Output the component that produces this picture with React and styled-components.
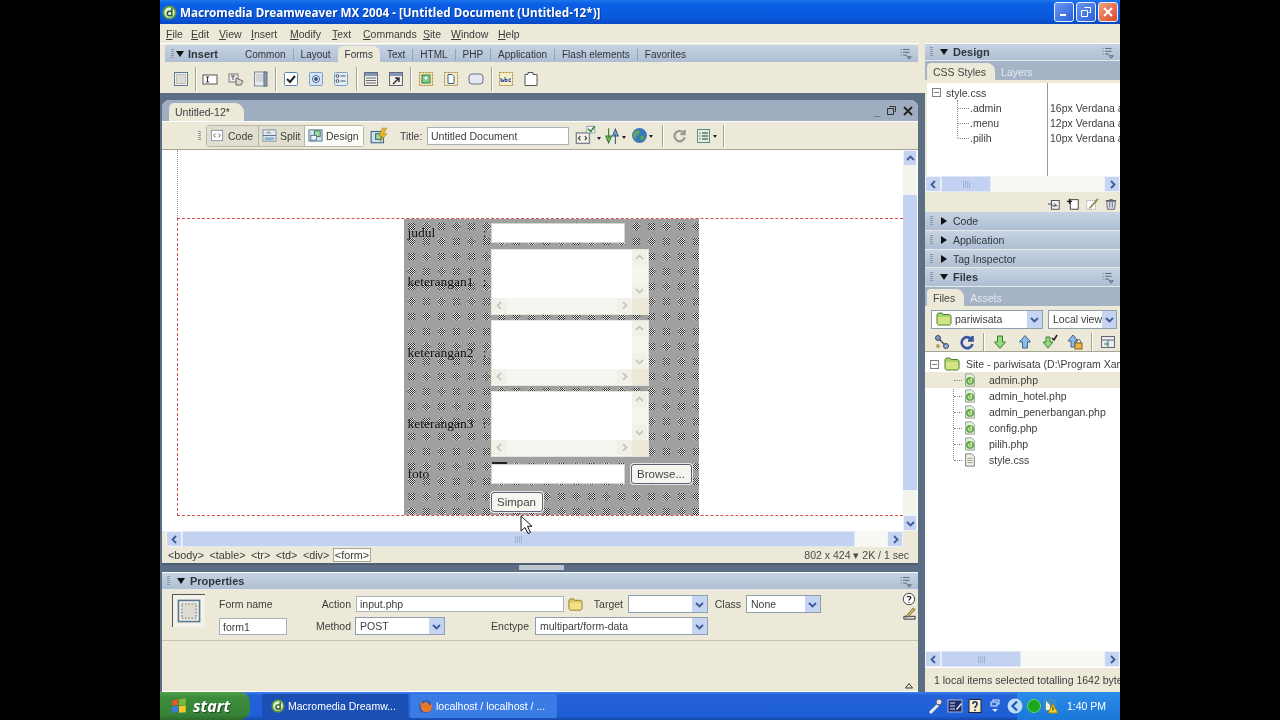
import React from 'react';
import styled, { createGlobalStyle } from 'styled-components';

const GlobalStyle = createGlobalStyle`
  html, body { margin: 0; padding: 0; background: #000; }
`;

const ui = `"Liberation Sans", Arial, sans-serif`;

const Screen = styled.div`
  position: relative;
  width: 960px;
  height: 720px;
  margin: 0 auto;
  display: flex;
  flex-direction: column;
  overflow: hidden;
  background: #ece9d8;
  font-family: ${ui};
  font-size: 10.5px;
  color: #3c3c3c;
  filter: blur(0.3px);
`;

const TitleBar = styled.div`
  height: 24px;
  flex: none;
  display: flex;
  align-items: center;
  padding: 0 2px 0 2px;
  background: linear-gradient(#1f77ee 0, #0a5fe4 4px, #0a58dc 18px, #0848c4 100%);
  color: #fff;
  font-family: "Noto Sans", sans-serif;
  font-weight: 700;
  font-size: 11.7px;
  white-space: nowrap;
`;
const TitleText = styled.span`
  margin-left: 3px;
  flex: 1;
  text-shadow: 1px 1px 0 #0a3a9c;
`;
const WinButton = styled.div`
  width: 20px;
  height: 20px;
  margin-left: 2px;
  border: 1px solid #e8eefc;
  border-radius: 3px;
  box-sizing: border-box;
  display: flex;
  align-items: center;
  justify-content: center;
  background: ${p => (p.$close ? 'linear-gradient(135deg,#f0a080,#d8492a)' : 'linear-gradient(135deg,#6b97ee,#2a5fd8)')};
`;

const MenuBar = styled.div`
  height: 19px;
  flex: none;
  display: flex;
  align-items: center;
  padding-left: 6px;
  background: #ece9d8;
`;
const MenuItem = styled.span`
  width: ${p => p.$w}px;
  flex: none;
  &:first-letter { text-decoration: underline; }
`;

const Workspace = styled.div`
  flex: 1;
  min-height: 0;
  display: flex;
  background: linear-gradient(#ece9d8 0, #ece9d8 50px, #5c6e84 50px);
`;
const LeftColumn = styled.div`
  width: 758px;
  display: flex;
  flex-direction: column;
`;
const RightColumn = styled.div`
  width: 195px;
  margin-left: 7px;
  display: flex;
  flex-direction: column;
  background: #ece9d8;
  border-top: 1px solid #fff;
`;

const PanelHead = styled.div`
  height: ${p => p.$h || 17}px;
  flex: none;
  display: flex;
  align-items: center;
  gap: 5px;
  padding: 0 6px 0 5px;
  box-sizing: border-box;
  background: linear-gradient(#c6d3e3, #afbed2);
  border-bottom: 1px solid #e6e8ea;
  font-weight: ${p => (p.$bold ? 700 : 400)};
  color: #30363e;
  font-size: ${p => (p.$bold ? 11 : 10.5)}px;
`;
const Grip = styled.i`
  width: 3px;
  height: 10px;
  margin-right: ${p => p.$m ?? 2}px;
  background: repeating-linear-gradient(#8c98a8 0 1px, transparent 1px 2px);
`;
const Grow = styled.div`
  flex: 1;
`;

const InsertPanel = styled.div`
  flex: none;
  height: 52px;
  box-sizing: border-box;
  border-top: 1px solid #fff;
  padding-top: 1px;
  display: flex;
  flex-direction: column;
`;
const InsertHead = styled(PanelHead)`
  gap: 0;
  padding-left: 6px;
  margin-left: 5px;
  border-bottom: none;
`;
const InsertTitle = styled.b`
  width: 50px;
  margin-left: 4px;
  font-size: 11px;
`;
const InsertTab = styled.div`
  display: flex;
  align-items: center;
  padding: 0 7px;
  font-weight: 400;
  font-size: 10px;
  border-right: ${p => (p.$plain ? 'none' : '1px solid #93a2b6')};
  background: ${p => (p.$active ? '#ece9d8' : 'transparent')};
  border-radius: ${p => (p.$active ? '5px 7px 0 0' : '0')};
  height: ${p => (p.$active ? '16px' : '12px')};
  margin-top: ${p => (p.$active ? '1px' : '2px')};
`;
const InsertBar = styled.div`
  flex: 1;
  display: flex;
  align-items: center;
  padding-left: 8px;
`;
const Slot = styled.div`
  width: 25.3px;
  display: flex;
  justify-content: center;
  align-items: center;
`;
const VSep = styled.i`
  width: 1px;
  height: ${p => p.$h || 24}px;
  margin: 0 ${p => p.$m || 1.7}px;
  background: #a4a294;
  box-shadow: 1px 0 0 #fff;
`;

const DocWindow = styled.div`
  flex: none;
  height: 465px;
  box-sizing: border-box;
  margin: 5px 0 0 2px;
  display: flex;
  flex-direction: column;
  background: #ece9d8;
  border-radius: 8px 8px 0 0;
  overflow: hidden;
  border-bottom: 2px solid #4e5f75;
`;
const DocTabs = styled.div`
  height: 22px;
  flex: none;
  box-sizing: border-box;
  display: flex;
  align-items: flex-end;
  padding-left: 7px;
  background: #9eadc0;
  border-bottom: 1px solid #fff;
`;
const DocTab = styled.div`
  height: 18px;
  padding: 0 14px 0 6px;
  display: flex;
  align-items: center;
  background: #ece9d8;
  border-radius: 5px 9px 0 0;
  font-size: 10.5px;
`;
const DocWinIcons = styled.div`
  display: flex;
  align-items: center;
  gap: 6px;
  height: 100%;
  margin-right: 5px;
  font-size: 11px;
  color: #333;
`;
const DocBar = styled.div`
  height: 28px;
  flex: none;
  box-sizing: border-box;
  display: flex;
  align-items: center;
  padding-left: 36px;
  background: #ece9d8;
  border-bottom: 1px solid #a7a596;
`;
const ViewGroup = styled.div`
  display: flex;
  height: 20px;
  margin-left: 3px;
  border: 1px solid #b8b6a6;
  border-radius: 3px;
`;
const ViewButton = styled.div`
  display: flex;
  align-items: center;
  gap: 3px;
  width: ${p => p.$w}px;
  box-sizing: border-box;
  padding-left: 3px;
  background: ${p => (p.$active ? '#fbfbf8' : '#e2dfd0')};
  border-right: 1px solid #b8b6a6;
  &:last-child { border-right: none; }
`;
const TitleLabel = styled.span`
  width: 27px;
  flex: none;
  margin-left: 12px;
`;
const Field = styled.div`
  box-sizing: border-box;
  flex: none;
  width: ${p => p.$w}px;
  height: ${p => p.$h || 16}px;
  padding-left: 3px;
  display: flex;
  align-items: center;
  background: #fff;
  border: 1px solid #a9b2bc;
  white-space: nowrap;
  overflow: hidden;
`;
const BarIcon = styled.div`
  display: flex;
  align-items: center;
  margin-left: ${p => p.$l ?? 8}px;
`;
const Caret = styled.i`
  width: 0;
  height: 0;
  align-self: flex-end;
  margin: 0 0 6px 1px;
  border-left: 2.5px solid transparent;
  border-right: 2.5px solid transparent;
  border-top: 3px solid #222;
`;

const DocBody = styled.div`
  flex: 1;
  min-height: 0;
  display: flex;
  background: #fff;
`;
const Canvas = styled.div`
  position: relative;
  flex: 1;
  min-width: 0;
  padding: 68px 0 0 15px;
  box-sizing: border-box;
  background: #fff;
`;
const Ruler = styled.i`
  position: absolute;
  left: 15px;
  top: 0;
  height: 68px;
  border-left: 1px dotted #9a9a9a;
`;
const Page = styled.div`
  display: flex;
  justify-content: center;
  height: 298px;
  box-sizing: border-box;
  padding-left: 21px;
  border-top: 1px dashed #d0504c;
  border-bottom: 1px dashed #d0504c;
  border-left: 1px dashed #d0504c;
`;
const FormTable = styled.div`
  position: relative;
  width: 295px;
  height: 296px;
  box-sizing: border-box;
  background: #a0a0a0;
  display: grid;
  grid-template-columns: 87px 1fr;
  grid-template-rows: 28px 70px 72px 70px 30px 26px;
  font-family: "Liberation Serif", serif;
  font-size: 13.5px;
  color: #111;
  &::before {
    content: '';
    position: absolute;
    inset: 0;
    background: repeating-conic-gradient(#333 0 25%, #e4e4e4 0 50%) 0 0 / 2px 2px;
    -webkit-mask-image: radial-gradient(circle at 7.5px 7.5px, #000 0 3.8px, transparent 4.2px);
    -webkit-mask-size: 15px 15px;
    mask-image: radial-gradient(circle at 7.5px 7.5px, #000 0 3.8px, transparent 4.2px);
    mask-size: 15px 15px;
  }
`;
const FormLabel = styled.div`
  position: relative;
  display: flex;
  align-items: center;
  justify-content: space-between;
  padding: 0 4px 0 4px;
  grid-column: 1;
`;
const FormCell = styled.div`
  position: relative;
  grid-column: 2;
  display: flex;
  align-items: center;
  gap: 6px;
`;
const TextInput = styled.div`
  box-sizing: border-box;
  width: 134px;
  height: 20px;
  background: #fff;
  border: 1px solid #d4d4d0;
`;
const FileInput = styled(TextInput)`
  position: relative;
  &::before {
    content: '';
    position: absolute;
    left: 0;
    top: -3px;
    width: 15px;
    height: 2px;
    background: #222;
  }
`;
const TextArea = styled.div`
  width: 158px;
  height: 66px;
  display: grid;
  grid-template-columns: 1fr 16px;
  grid-template-rows: 1fr 16px;
  background: #fff;
  border: 1px solid #e4e4dc;
  box-sizing: border-box;
`;
const AreaV = styled.div`
  grid-row: 1;
  grid-column: 2;
  display: flex;
  flex-direction: column;
  justify-content: space-between;
  background: #f6f6f0;
`;
const AreaH = styled.div`
  grid-row: 2;
  grid-column: 1;
  display: flex;
  justify-content: space-between;
  background: #f6f6f0;
`;
const AreaCorner = styled.div`
  grid-row: 2;
  grid-column: 2;
  background: #ece9d8;
`;
const AreaBtn = styled.div`
  width: 15px;
  height: 15px;
  display: flex;
  align-items: center;
  justify-content: center;
  background: #f1f1ea;
`;
const PushButton = styled.div`
  box-sizing: border-box;
  width: ${p => p.$w}px;
  height: 20px;
  display: flex;
  align-items: center;
  justify-content: center;
  font-family: ${ui};
  font-size: 11.5px;
  color: #444;
  background: #f6f6f0;
  border: 1px solid #5a6470;
  border-radius: 3px;
  box-shadow: 0 0 0 1px #e8e8e8;
`;
const Cursor = styled.svg`
  position: absolute;
  left: 358px;
  top: 365px;
`;

const VScroll = styled.div`
  width: 14px;
  flex: none;
  margin-right: 1px;
  display: flex;
  flex-direction: column;
  background: #f4f4ee;
`;
const VThumb = styled.div`
  flex: none;
  height: 295px;
  margin-top: 29px;
  background: #c3d2f1;
`;
const ScrollBtn = styled.div`
  flex: none;
  width: ${p => p.$w || 14}px;
  height: ${p => p.$h || 15}px;
  display: flex;
  align-items: center;
  justify-content: center;
  background: #c6d4f2;
  border: 1px solid #eef2fa;
  box-sizing: border-box;
`;
const HScroll = styled.div`
  height: 16px;
  flex: none;
  display: flex;
  align-items: center;
  margin-left: ${p => p.$l || 0}px;
  margin-right: ${p => p.$r || 0}px;
  background: #f8f8f4;
`;
const HThumb = styled.div`
  width: ${p => p.$w}px;
  height: 100%;
  box-sizing: border-box;
  display: flex;
  align-items: center;
  justify-content: center;
  background: #c3d2f1;
  border: 1px solid #dfe7f7;
  &::after {
    content: '';
    width: 7px;
    height: 7px;
    background: repeating-linear-gradient(90deg, #9fb2d8 0 1px, transparent 1px 2px);
  }
`;

const TagBar = styled.div`
  height: 16px;
  flex: none;
  display: flex;
  align-items: center;
  gap: 5.5px;
  padding: 0 0 0 6px;
  background: #ece9d8;
  font-size: 10.8px;
`;
const ActiveTag = styled.span`
  background: #fbfbf6;
  border: 1px solid #a8a89a;
  margin-left: -2px;
  padding: 0 1px;
`;
const TagStat = styled.span`
  margin-right: 9px;
  font-size: 10.5px;
  color: #4a4a4a;
`;

const Splitter = styled.div`
  height: 7px;
  flex: none;
  display: flex;
  justify-content: center;
`;
const SplitHandle = styled.div`
  width: 45px;
  height: 5px;
  margin-left: 4px;
  background: #bcc4cc;
`;

const Properties = styled.div`
  flex: 1;
  margin: 0 0 0 2px;
  display: flex;
  flex-direction: column;
  background: #ece9d8;
  border-top: 1px solid #fff;
  border-bottom: 1px solid #fff;
`;
const PropForm = styled.div`
  height: 50px;
  flex: none;
  display: flex;
  padding-left: 10px;
  border-bottom: 1px solid #c5c2b0;
`;
const FormThumb = styled.div`
  width: 32px;
  height: 32px;
  margin-top: 4px;
  flex: none;
  display: flex;
  align-items: center;
  justify-content: center;
  border-top: 1px solid #555;
  border-left: 1px solid #555;
  background: #f4f2e8;
`;
const FormNameCol = styled.div`
  width: 68px;
  margin-left: 14px;
  flex: none;
  display: flex;
  flex-direction: column;
  gap: 8px;
  padding-top: 8px;
`;
const PropRows = styled.div`
  flex: 1;
  display: flex;
  flex-direction: column;
  gap: 4px;
  padding-top: 5px;
`;
const PropRow = styled.div`
  height: 18px;
  display: flex;
  align-items: center;
`;
const PropLabel = styled.span`
  width: ${p => p.$w}px;
  flex: none;
  text-align: right;
  margin-right: ${p => p.$m || 5}px;
`;
const SelectBox = styled.div`
  box-sizing: border-box;
  width: ${p => p.$w}px;
  height: ${p => p.$h || 18}px;
  flex: none;
  display: flex;
  align-items: center;
  justify-content: space-between;
  padding-left: 4px;
  background: #fff;
  border: 1px solid #8f9fb2;
  white-space: nowrap;
`;
const SelectArrow = styled.div`
  width: 15px;
  height: 100%;
  display: flex;
  align-items: center;
  justify-content: center;
  background: #c6d4f2;
`;
const PropHelp = styled.div`
  width: 16px;
  flex: none;
  margin-right: 1px;
  padding-top: 2px;
  display: flex;
  flex-direction: column;
  align-items: center;
  gap: 0;
`;
const PropFoot = styled.div`
  flex: 1;
  display: flex;
  justify-content: flex-end;
  align-items: flex-end;
  padding: 0 5px 2px 0;
`;

const PanelTabs = styled.div`
  height: 19px;
  flex: none;
  display: flex;
  align-items: flex-end;
  padding-left: 2px;
  background: #a5b3c6;
`;
const PanelTab = styled.div`
  height: 17px;
  padding: 0 ${p => (p.$active ? '9px' : '6px')} 0 6px;
  display: flex;
  align-items: center;
  color: ${p => (p.$active ? '#444' : '#e4e9ef')};
  background: ${p => (p.$active ? '#ece9d8' : 'transparent')};
  border-radius: 4px 8px 0 0;
`;
const CssBox = styled.div`
  height: 93px;
  flex: none;
  display: flex;
  margin: 3px 0 0 2px;
  background: #fff;
`;
const CssNames = styled.div`
  width: 121px;
  flex: none;
  box-sizing: border-box;
  padding: 2px 0 0 5px;
  border-right: 1px solid #9a9a8e;
`;
const CssValues = styled.div`
  flex: 1;
  min-width: 0;
  overflow: hidden;
  padding-top: 17px;
  padding-left: 2px;
  white-space: nowrap;
`;
const TreeLine = styled.div`
  height: 15px;
  display: flex;
  align-items: center;
  gap: 5px;
`;
const Expander = styled.i`
  width: 9px;
  height: 9px;
  flex: none;
  box-sizing: border-box;
  border: 1px solid #80807a;
  background: linear-gradient(#80807a, #80807a) center / 5px 1px no-repeat #fff;
`;
const CssChildren = styled.div`
  margin-left: 25px;
  border-left: 1px dotted #888;
  height: 38px;
`;
const CssChild = styled.div`
  height: 15px;
  display: flex;
  align-items: center;
  padding-left: 12px;
  position: relative;
  &::before {
    content: '';
    position: absolute;
    left: 0;
    top: 8px;
    width: 11px;
    border-top: 1px dotted #888;
  }
`;
const ActionRow = styled.div`
  height: 20px;
  flex: none;
  box-sizing: border-box;
  padding: 4px 2px 0 0;
  display: flex;
  align-items: center;
  justify-content: flex-end;
  gap: 5px;
`;
const FilesTools = styled.div`
  height: 19px;
  flex: none;
  display: flex;
  align-items: center;
  padding-left: 9px;
  border-bottom: 1px solid #a7a596;
`;
const FilesSelects = styled.div`
  height: 26px;
  flex: none;
  display: flex;
  align-items: center;
  gap: 5px;
  padding-left: 6px;
`;
const FolderText = styled.span`
  display: flex;
  align-items: center;
  gap: 3px;
`;
const FileTree = styled.div`
  flex: 1;
  min-height: 0;
  background: #fff;
  padding-top: 4px;
`;
const SiteRow = styled.div`
  height: 16px;
  display: flex;
  align-items: center;
  padding-left: 5px;
  white-space: nowrap;
  overflow: hidden;
`;
const SiteName = styled.span`
  margin-left: 6px;
`;
const FileList = styled.div`
  position: relative;
  &::before {
    content: '';
    position: absolute;
    left: 28px;
    top: 0;
    height: 88px;
    border-left: 1px dotted #888;
  }
`;
const FileRow = styled.div`
  height: 16px;
  display: flex;
  align-items: center;
  gap: 12px;
  padding-left: 38px;
  position: relative;
  background: ${p => (p.$selected ? '#ece9d8' : 'transparent')};
  &::before {
    content: '';
    position: absolute;
    left: 29px;
    top: 8px;
    width: 8px;
    border-top: 1px dotted #888;
  }
`;
const StatusLine = styled.div`
  height: 24px;
  flex: none;
  display: flex;
  align-items: center;
  padding-left: 9px;
  white-space: nowrap;
  overflow: hidden;
  border-top: 1px solid #fff;
`;

const Taskbar = styled.div`
  height: 28px;
  flex: none;
  display: flex;
  align-items: center;
  background: linear-gradient(#3f83ea 0, #2362d8 3px, #1f5fd6 24px, #1848a8 100%);
  color: #fff;
`;
const StartButton = styled.div`
  width: 90px;
  height: 100%;
  display: flex;
  align-items: center;
  gap: 5px;
  padding-left: 10px;
  box-sizing: border-box;
  background: linear-gradient(#4fa04f 0, #3c8c3c 20%, #388438 80%, #2c6c2c 100%);
  border-radius: 0 10px 10px 0;
  font: italic 700 16px "Noto Sans", sans-serif;
  text-shadow: 1px 1px 1px #204820;
`;
const TaskButton = styled.div`
  width: ${p => p.$w}px;
  height: 24px;
  margin-left: ${p => p.$l}px;
  padding-left: ${p => (p.$active ? '9px' : '8px')};
  display: flex;
  align-items: center;
  gap: 3px;
  box-sizing: border-box;
  border-radius: 2px;
  white-space: nowrap;
  background: ${p => (p.$active ? '#1c4fb4' : '#3a7ce4')};
  font-size: 10.5px;
`;
const QuickLaunch = styled.div`
  margin-left: auto;
  margin-right: -6px;
  position: relative;
  display: flex;
  align-items: center;
  gap: 4px;
`;
const Tray = styled.div`
  width: 103px;
  height: 100%;
  flex: none;
  display: flex;
  align-items: center;
  gap: 1px;
  padding-left: 9px;
  box-sizing: border-box;
  white-space: nowrap;
  background: linear-gradient(#2c8ce8, #1a78d8);
  font-size: 10.5px;
`;
const Clock = styled.span`
  margin-left: 7px;
`;

// icon drawings, all on a 16x16 box
const glyphs = {
  form: <><rect x="1.5" y="1.5" width="13" height="13" fill="#f4f2e8" stroke="#5a7a94" /><rect x="3.5" y="3.5" width="9" height="9" fill="#dcdcd2" stroke="#999" strokeDasharray="1 1" /></>,
  text: <><rect x="1" y="4" width="14" height="9" fill="#fff" stroke="#555" /><path d="M4 6h3M5.5 6v5M4 11h3" stroke="#333" fill="none" /></>,
  hidden: <><rect x="1" y="3" width="9" height="8" fill="#eee" stroke="#777" /><path d="M3 5h4M5 5v4" stroke="#555" /><path d="M8 7l7 3-2 4H8z" fill="#d8d8c8" stroke="#666" /></>,
  area: <><rect x="1.5" y="1" width="11" height="14" fill="#e8ecf2" stroke="#7a8a9c" /><path d="M3 4h8M3 6h8M3 8h8M3 10h8" stroke="#bbb" /><rect x="11" y="1" width="3" height="14" fill="#8ca0b8" stroke="#667" /></>,
  check: <><rect x="1.5" y="1.5" width="13" height="13" rx="1" fill="#fff" stroke="#5d84ac" /><path d="M4 8l3 3 5-6" stroke="#222" strokeWidth="2" fill="none" /></>,
  radio: <><rect x="1.5" y="1.5" width="13" height="13" rx="1" fill="#d6e4f4" stroke="#7d9fc4" /><circle cx="8" cy="8" r="3.5" fill="#fff" stroke="#3a5f94" /><circle cx="8" cy="8" r="2" fill="#34587c" /></>,
  radios: <><rect x="1.5" y="1.5" width="13" height="13" rx="1" fill="#e4ecf6" stroke="#7d9fc4" /><circle cx="4.5" cy="5" r="1.4" fill="#fff" stroke="#345" /><circle cx="4.5" cy="10" r="1.4" fill="#fff" stroke="#345" /><path d="M7.5 5h5M7.5 10h5" stroke="#456" /></>,
  list: <><rect x="1.5" y="1.5" width="13" height="13" fill="#f2f0e6" stroke="#667" /><rect x="2" y="2" width="12" height="3" fill="#7e98bc" /><path d="M3 7h10M3 9.5h10M3 12h10" stroke="#667" /></>,
  jump: <><rect x="1.5" y="1.5" width="13" height="13" fill="#f2f0e6" stroke="#667" /><rect x="2" y="2" width="12" height="3" fill="#7e98bc" /><path d="M5 13l6-6M7 7h4v4" stroke="#333" strokeWidth="1.5" fill="none" /></>,
  image: <><rect x="1.5" y="1.5" width="13" height="13" fill="#f0e6b4" stroke="#a88a3c" strokeDasharray="2 1" /><rect x="4" y="4" width="8" height="8" fill="#7ccc8c" stroke="#3a7a54" /><circle cx="8" cy="7" r="1.5" fill="#fff" /></>,
  file: <><rect x="1.5" y="1.5" width="13" height="13" fill="#f4ecc8" stroke="#a88a3c" strokeDasharray="2 1" /><path d="M5 3.5h4l2 2v7H5z" fill="#fff" stroke="#3d5c8c" /></>,
  button: <rect x="1" y="3" width="14" height="10" rx="3" fill="#e4e8f4" stroke="#6a7480" />,
  label: <><rect x="1.5" y="1.5" width="13" height="13" fill="#f6eec8" stroke="#a88a3c" strokeDasharray="2 1" /><path d="M3 7v3M3 9h2.5v1.5H3M7 6v4.5h2V8.5H7M13 8h-2v2.5h2" stroke="#2d4a94" fill="none" /></>,
  fieldset: <path d="M2 3.5h3v-2h5v2h4v11H2z" fill="#fff" stroke="#555" />,
  code: <><rect x="1.5" y="2.5" width="12" height="11" fill="#fff" stroke="#8a94a0" /><path d="M6 6L4 8l2 2M9 6l2 2-2 2" stroke="#444" fill="none" /></>,
  split: <><rect x="1" y="2" width="14" height="12" fill="#dfe8f0" stroke="#86909c" /><path d="M1 8h14" stroke="#5a6a7a" /><path d="M5 6l2-2 2 2M3 11h10" stroke="#557" fill="none" /><rect x="3" y="10" width="9" height="3" fill="#88b8d8" /></>,
  design: <><rect x="1" y="2" width="14" height="12" fill="#cfe0ee" stroke="#557a98" /><rect x="7" y="3" width="6" height="6" fill="#9fd8a0" stroke="#3a7a5c" /><rect x="3" y="8" width="6" height="5" fill="#f4f4f4" stroke="#557a98" /></>,
  live: <><rect x="1" y="4" width="11" height="10" fill="#cfe0ee" stroke="#46688c" /><rect x="5" y="6" width="5" height="5" fill="#9fd8a0" stroke="#3a7a5c" /><path d="M11 1h4l-3 5h3l-6 7 2-5H8z" fill="#e9bc2c" stroke="#96761c" strokeWidth=".5" /></>,
  validate: <><rect x="1" y="6" width="10" height="8" fill="#f4f2e8" stroke="#7a8490" /><path d="M4 8.5L2.8 10 4 11.5M7.5 8.5L8.8 10 7.5 11.5" stroke="#444" fill="none" /><path d="M9 1h6v5H9z" fill="#fff" stroke="#789" strokeWidth=".6" /><path d="M10 3l2 2 3-4" stroke="#3a8a3c" strokeWidth="1.3" fill="none" /></>,
  transfer: <><path d="M5 1v9M2.5 8L5 14l2.5-6z" fill="#84c66c" stroke="#3a7a34" /><path d="M11 15V6M8.5 8L11 2l2.5 6z" fill="#8cb4dc" stroke="#3a608c" /></>,
  globe: <><circle cx="8" cy="8" r="7" fill="#3a78b8" /><path d="M4 4c3-2 5 0 4 2S4 7 5 10s-3 0-3-2 1-3 2-4zM10 8c2 0 3 1 2 3s-3 2-3 0 0-3 1-3z" fill="#5ca85c" /></>,
  refresh: <path d="M13 6a5.5 5.5 0 1 0 .5 4M13.5 2v4.5H9" fill="none" stroke="#9a9a94" strokeWidth="2.4" />,
  options: <><rect x="1.5" y="1.5" width="12" height="13" fill="#e0eee0" stroke="#5c8c7c" /><path d="M3.5 5h1M6 5h6M3.5 8h1M6 8h6M3.5 11h1M6 11h6" stroke="#333" /></>,
  folder: <><path d="M1 4c0-1 1-2 2-2h3l1 1.5h6c1 0 2 1 2 2V12c0 1-1 2-2 2H3c-1 0-2-1-2-2z" fill="#e2c868" stroke="#8a7a2c" /><path d="M1.8 6h12.4V12c0 .8-.6 1.2-1.2 1.2H3c-.6 0-1.2-.4-1.2-1.2z" fill="#f0e08c" /></>,
  siteFolder: <><path d="M1 4c0-1 1-2 2-2h3l1 1.5h6c1 0 2 1 2 2V12c0 1-1 2-2 2H3c-1 0-2-1-2-2z" fill="#a8d46c" stroke="#4a7a2c" /><path d="M1.8 6h12.4V12c0 .8-.6 1.2-1.2 1.2H3c-.6 0-1.2-.4-1.2-1.2z" fill="#d4e484" /></>,
  php: <><path d="M3 1h7l3 3v11H3z" fill="#e8f0e0" stroke="#8a988c" /><circle cx="8" cy="9" r="4.5" fill="#5ca838" /><path d="M9.5 5.5v5.5H7.5a1.5 1.5 0 1 1 0-3h2" fill="none" stroke="#fff" /></>,
  css: <><path d="M3 1h7l3 3v11H3z" fill="#f4f2e4" stroke="#67747c" /><path d="M5 6h6M5 8.5h6M5 11h6" stroke="#8a9080" /></>,
  connect: <><circle cx="4" cy="4" r="2.5" fill="#7c9cc8" stroke="#446" /><circle cx="12" cy="12" r="2.5" fill="#8cb4dc" stroke="#446" /><circle cx="4" cy="12" r="2" fill="#b8a060" /><path d="M5 5l6 6" stroke="#556" strokeWidth="1.6" /></>,
  reload: <path d="M13 6a5.5 5.5 0 1 0 .5 4M13.5 2v4.5H9" fill="none" stroke="#3a54a4" strokeWidth="2.6" />,
  down: <path d="M5.5 2h5v6h3L8 14.5 2.5 8h3z" fill="#96d87c" stroke="#3a8034" />,
  up: <path d="M5.5 14h5V8h3L8 1.5 2.5 8h3z" fill="#8cbce4" stroke="#3a6494" />,
  downCheck: <><path d="M4 3h4v5h3l-5 6-5-6h3z" fill="#96d87c" stroke="#3a8034" /><path d="M10 4l2 2 3-5" fill="none" stroke="#222" strokeWidth="1.5" /></>,
  upLock: <><path d="M4 13h4V7h3L6 1 1 7h3z" fill="#8cbce4" stroke="#3a6494" /><rect x="8" y="9" width="7" height="6" fill="#e8b44c" stroke="#8a6418" /><path d="M9.5 9V7.5a2 2 0 0 1 4 0V9" fill="none" stroke="#666" /></>,
  expand: <><rect x="1.5" y="2.5" width="13" height="11" fill="#e8ecf0" stroke="#667" /><path d="M1.5 6h13" stroke="#667" /><path d="M8 6v7.5" stroke="#667" /><path d="M4 10h4M6.5 8.5L8 10l-1.5 1.5" stroke="#2a8a4c" fill="none" /></>,
  attach: <><rect x="5" y="4" width="9" height="10" fill="#f0f0e8" stroke="#445" /><path d="M1 8h5M8 7l2 2-2 2" stroke="#335" fill="none" /><path d="M6 10h6" stroke="#335" /></>,
  newStyle: <><path d="M5 3h9v11H5z" fill="#fff" stroke="#333" /><path d="M1 5h6M4 2v6" stroke="#222" strokeWidth="1.5" /></>,
  edit: <><path d="M2 4h10v10H2z" fill="#fff" stroke="#889" strokeDasharray="1 1" /><path d="M6 11l8-9 1 1-8 9-2 1z" fill="#c0a040" stroke="#554" strokeWidth=".6" /></>,
  trash: <><path d="M3 5h10l-1 9H4z" fill="#dfe8f0" stroke="#556" /><path d="M2 4h12M6 3h4M6.5 6v6M9.5 6v6" stroke="#556" /></>,
  pencil: <><path d="M2 11h12v3H2z" fill="#ddd" stroke="#333" /><path d="M5 10l7-8 2 2-7 7-3 1z" fill="#d8b848" stroke="#444" strokeWidth=".7" /></>,
  help: <><circle cx="8" cy="8" r="6.5" fill="#fff" stroke="#333" /><path d="M5.8 6.2C6 4.5 10 4.4 10 6.4c0 1.6-2 1.5-2 3.2M8 11v1.4" stroke="#222" strokeWidth="1.5" fill="none" /></>,
  dw: <><circle cx="8" cy="8" r="7.5" fill="#5a9a3c" /><circle cx="8" cy="8" r="5.5" fill="#e4f0d4" /><path d="M10.5 3.5v8H8a2.4 2.4 0 1 1 0-4.8h2.5" fill="none" stroke="#2c5c2c" strokeWidth="1.6" /></>,
  firefox: <><circle cx="8" cy="8" r="7" fill="#3a5ca8" /><path d="M3 2c-1 5 0 12 6 12s7-6 5-10c0 2-1 3-2 3 0-3-3-3-4-5 0 2-2 2-3 3z" fill="#e8782c" /></>,
  xp: <><path d="M2 3l5-1v5l-5 .5z" fill="#e8562c" /><path d="M8 2l6-1v6l-6 .5z" fill="#7cb83c" /><path d="M2 8.5l5-.5v5l-5 1z" fill="#3c7ce4" /><path d="M8 8l6-.5v6L8 14z" fill="#f4c82c" /></>,
  mic: <><path d="M2 14l8-8 2 2-8 8z" fill="#e4e8f0" stroke="#aab" strokeWidth=".5" /><circle cx="12" cy="4" r="3" fill="#dde" stroke="#556" /></>,
  note: <><rect x="1" y="2" width="14" height="12" fill="#1c2c6c" stroke="#ddd" strokeWidth=".7" /><path d="M3 5h5M3 8h5M3 11h5" stroke="#dde" /><path d="M9 11l5-6 1 1-5 6z" fill="#f4f0e0" /></>,
  book: <><rect x="2" y="1.5" width="12" height="13" fill="#f4ecc8" stroke="#223" /><path d="M6 6c0-3 4-3 4 0 0 2-2 2-2 4M8 11.5v1.5" stroke="#1c2c6c" strokeWidth="1.6" fill="none" /></>,
  windows: <><rect x="6" y="2" width="6" height="4" fill="none" stroke="#dce8fa" /><rect x="4" y="4" width="6" height="4" fill="#2a70d8" stroke="#dce8fa" /><path d="M5 11h6l-3 3z" fill="#dce8fa" /></>,
  back: <><circle cx="8" cy="8" r="7.5" fill="#bcdcf8" /><path d="M10 3.5L5.5 8l4.5 4.5" fill="none" stroke="#1c58b4" strokeWidth="2.2" /></>,
  green: <circle cx="8" cy="8" r="6.5" fill="#1ca820" stroke="#60e060" />,
  warn: <><rect x="1" y="1" width="12" height="12" fill="#3a8cc8" /><path d="M3 3l4 4v5H3z" fill="#f4f0d0" /><path d="M10 6l5 9H5z" fill="#f4d42c" stroke="#a08010" /><path d="M10 9v3.5" stroke="#222" /></>,
  menu: <path d="M2 3h1M5 3h8M2 6.5h1M5 6.5h8M2 10h1M5 10h5M10 12h5l-2.5 3z" stroke="#4a5666" fill="none" />,
};

const Icon = ({ name, size = 16 }) => (
  <svg width={size} height={size} viewBox="0 0 16 16">{glyphs[name]}</svg>
);

const Triangle = ({ right }) => (
  <svg width="8" height="8" viewBox="0 0 8 8">
    <path d={right ? 'M1 0l6 4-6 4z' : 'M0 1h8L4 7z'} fill="#111" />
  </svg>
);

const Chevron = ({ dir = 'down', color = '#3a5c9c', size = 9 }) => {
  const paths = { down: 'M1 3l3.5 3.5L8 3', up: 'M1 6l3.5-3.5L8 6', left: 'M6 1L2.5 4.5 6 8', right: 'M3 1l3.5 3.5L3 8' };
  return (
    <svg width={size} height={size} viewBox="0 0 9 9">
      <path d={paths[dir]} fill="none" stroke={color} strokeWidth="1.8" />
    </svg>
  );
};

const Select = ({ w, h, children }) => (
  <SelectBox $w={w} $h={h}>
    <span>{children}</span>
    <SelectArrow><Chevron /></SelectArrow>
  </SelectBox>
);

const Scrollbar = ({ thumb, l, r }) => (
  <HScroll $l={l} $r={r}>
    <ScrollBtn $w={16} $h={16}><Chevron dir="left" /></ScrollBtn>
    <HThumb $w={thumb} />
    <Grow />
    <ScrollBtn $w={16} $h={16}><Chevron dir="right" /></ScrollBtn>
  </HScroll>
);

const FormArea = () => (
  <TextArea>
    <div />
    <AreaV>
      <AreaBtn><Chevron dir="up" color="#c8c8c0" /></AreaBtn>
      <AreaBtn><Chevron color="#c8c8c0" /></AreaBtn>
    </AreaV>
    <AreaH>
      <AreaBtn><Chevron dir="left" color="#c8c8c0" /></AreaBtn>
      <AreaBtn><Chevron dir="right" color="#c8c8c0" /></AreaBtn>
    </AreaH>
    <AreaCorner />
  </TextArea>
);

const insertGroups = [
  ['form'],
  ['text', 'hidden', 'area'],
  ['check', 'radio', 'radios'],
  ['list', 'jump'],
  ['image', 'file', 'button'],
  ['label', 'fieldset'],
];
const insertTabs = ['Common', 'Layout', 'Forms', 'Text', 'HTML', 'PHP', 'Application', 'Flash elements', 'Favorites'];
const menus = [['File', 25], ['Edit', 28], ['View', 32], ['Insert', 39], ['Modify', 42], ['Text', 31], ['Commands', 60], ['Site', 28], ['Window', 47], ['Help', 30]];
const files = [
  ['php', 'admin.php', true],
  ['php', 'admin_hotel.php'],
  ['php', 'admin_penerbangan.php'],
  ['php', 'config.php'],
  ['php', 'pilih.php'],
  ['css', 'style.css'],
];

export default function App() {
  return (
    <>
      <GlobalStyle />
      <Screen>
        <TitleBar>
          <Icon name="dw" size={15} />
          <TitleText>Macromedia Dreamweaver MX 2004 - [Untitled Document (Untitled-12*)]</TitleText>
          <WinButton><svg width="10" height="10"><rect x="1" y="7" width="6" height="2" fill="#fff" /></svg></WinButton>
          <WinButton><svg width="12" height="12"><path d="M4.5 1.5h6v5h-2M1.5 4.5h6v6h-6z" fill="none" stroke="#fff" /></svg></WinButton>
          <WinButton $close><svg width="12" height="12"><path d="M2 2l8 8M10 2l-8 8" stroke="#fff" strokeWidth="2" /></svg></WinButton>
        </TitleBar>
        <MenuBar>
          {menus.map(([m, w]) => <MenuItem key={m} $w={w}>{m}</MenuItem>)}
        </MenuBar>
        <Workspace>
          <LeftColumn>
            <InsertPanel>
              <InsertHead>
                <Grip />
                <Triangle />
                <InsertTitle>Insert</InsertTitle>
                {insertTabs.map(t => (
                  <InsertTab key={t} $active={t === 'Forms'} $plain={t === 'Forms' || t === 'Layout' || t === 'Favorites'}>{t}</InsertTab>
                ))}
                <Grow />
                <Icon name="menu" size={13} />
              </InsertHead>
              <InsertBar>
                {insertGroups.map((group, i) => (
                  <React.Fragment key={group[0]}>
                    {i > 0 && <VSep />}
                    {group.map(name => <Slot key={name}><Icon name={name} /></Slot>)}
                  </React.Fragment>
                ))}
              </InsertBar>
            </InsertPanel>
            <DocWindow>
              <DocTabs>
                <DocTab>Untitled-12*</DocTab>
                <Grow />
                <DocWinIcons>
                  <b>_</b>
                  <svg width="11" height="11"><path d="M3.5 1.5h6v5h-1M1.5 3.5h6v6h-6z" fill="none" stroke="#333" /></svg>
                  <svg width="10" height="10"><path d="M1 1l8 8M9 1l-8 8" stroke="#222" strokeWidth="1.8" /></svg>
                </DocWinIcons>
              </DocTabs>
              <DocBar>
                <Grip $m={2} />
                <ViewGroup>
                  <ViewButton $w={52}><Icon name="code" size={15} />Code</ViewButton>
                  <ViewButton $w={46}><Icon name="split" size={15} />Split</ViewButton>
                  <ViewButton $w={58} $active><Icon name="design" size={15} />Design</ViewButton>
                </ViewGroup>
                <BarIcon $l={6}><Icon name="live" size={18} /></BarIcon>
                <TitleLabel>Title:</TitleLabel>
                <Field $w={142} $h={18}>Untitled Document</Field>
                <BarIcon $l={6}><Icon name="validate" size={21} /><Caret /></BarIcon>
                <BarIcon $l={2}><Icon name="transfer" size={18} /><Caret /></BarIcon>
                <BarIcon $l={5}><Icon name="globe" size={17} /><Caret /></BarIcon>
                <VSep $h={22} $m={9} />
                <BarIcon $l={0}><Icon name="refresh" size={15} /></BarIcon>
                <BarIcon $l={9}><Icon name="options" size={16} /><Caret /></BarIcon>
                <VSep $h={22} $m={6} />
              </DocBar>
              <DocBody>
                <Canvas>
                  <Ruler />
                  <Page>
                    <FormTable>
                      <FormLabel>judul <span>:</span></FormLabel>
                      <FormCell><TextInput /></FormCell>
                      <FormLabel>keterangan1 <span>:</span></FormLabel>
                      <FormCell><FormArea /></FormCell>
                      <FormLabel>keterangan2 <span>:</span></FormLabel>
                      <FormCell><FormArea /></FormCell>
                      <FormLabel>keterangan3 <span>:</span></FormLabel>
                      <FormCell><FormArea /></FormCell>
                      <FormLabel>foto</FormLabel>
                      <FormCell><FileInput /><PushButton $w={61}>Browse...</PushButton></FormCell>
                      <div />
                      <FormCell><PushButton $w={52}>Simpan</PushButton></FormCell>
                    </FormTable>
                  </Page>
                  <Cursor width="14" height="20" viewBox="0 0 14 20">
                    <path d="M1 1v15l4-3.5 3 6 2.5-1.2-3-6H12z" fill="#fff" stroke="#111" />
                  </Cursor>
                </Canvas>
                <VScroll>
                  <ScrollBtn $h={16}><Chevron dir="up" /></ScrollBtn>
                  <VThumb />
                  <Grow />
                  <ScrollBtn $h={16}><Chevron /></ScrollBtn>
                </VScroll>
              </DocBody>
              <Scrollbar thumb={673} l={4} r={15} />
              <TagBar>
                <span>&lt;body&gt;</span>
                <span>&lt;table&gt;</span>
                <span>&lt;tr&gt;</span>
                <span>&lt;td&gt;</span>
                <span>&lt;div&gt;</span>
                <ActiveTag>&lt;form&gt;</ActiveTag>
                <Grow />
                <TagStat>802 x 424 ▾ 2K / 1 sec</TagStat>
              </TagBar>
            </DocWindow>
            <Splitter><SplitHandle /></Splitter>
            <Properties>
              <PanelHead $bold>
                <Grip />
                <Triangle />
                Properties
                <Grow />
                <Icon name="menu" size={13} />
              </PanelHead>
              <PropForm>
                <FormThumb><Icon name="form" size={26} /></FormThumb>
                <FormNameCol>
                  <span>Form name</span>
                  <Field $w={68} $h={17}>form1</Field>
                </FormNameCol>
                <PropRows>
                  <PropRow>
                    <PropLabel $w={64}>Action</PropLabel>
                    <Field $w={208}>input.php</Field>
                    <BarIcon $l={4}><Icon name="folder" size={15} /></BarIcon>
                    <PropLabel $w={40}>Target</PropLabel>
                    <Select w={80} />
                    <PropLabel $w={33}>Class</PropLabel>
                    <Select w={75}>None</Select>
                  </PropRow>
                  <PropRow>
                    <PropLabel $w={64} $m={4}>Method</PropLabel>
                    <Select w={90}>POST</Select>
                    <PropLabel $w={84} $m={6}>Enctype</PropLabel>
                    <Select w={173}>multipart/form-data</Select>
                  </PropRow>
                </PropRows>
                <PropHelp>
                  <Icon name="help" size={14} />
                  <Icon name="pencil" size={15} />
                </PropHelp>
              </PropForm>
              <PropFoot>
                <svg width="8" height="6"><path d="M4 .5L7.5 5h-7z" fill="#f4f2e8" stroke="#333" /></svg>
              </PropFoot>
            </Properties>
          </LeftColumn>

          <RightColumn>
            <PanelHead $bold>
              <Grip />
              <Triangle />
              Design
              <Grow />
              <Icon name="menu" size={13} />
            </PanelHead>
            <PanelTabs>
              <PanelTab $active>CSS Styles</PanelTab>
              <PanelTab>Layers</PanelTab>
            </PanelTabs>
            <CssBox>
              <CssNames>
                <TreeLine><Expander />style.css</TreeLine>
                <CssChildren>
                  <CssChild>.admin</CssChild>
                  <CssChild>.menu</CssChild>
                  <CssChild>.pilih</CssChild>
                </CssChildren>
              </CssNames>
              <CssValues>
                <TreeLine>16px Verdana a</TreeLine>
                <TreeLine>12px Verdana a</TreeLine>
                <TreeLine>10px Verdana a</TreeLine>
              </CssValues>
            </CssBox>
            <Scrollbar thumb={50} />
            <ActionRow>
              <Icon name="attach" size={14} />
              <Icon name="newStyle" size={14} />
              <Icon name="edit" size={14} />
              <Icon name="trash" size={14} />
            </ActionRow>
            <PanelHead $h={19}><Grip /><Triangle right />Code</PanelHead>
            <PanelHead $h={19}><Grip /><Triangle right />Application</PanelHead>
            <PanelHead $h={18}><Grip /><Triangle right />Tag Inspector</PanelHead>
            <PanelHead $h={19} $bold>
              <Grip />
              <Triangle />
              Files
              <Grow />
              <Icon name="menu" size={13} />
            </PanelHead>
            <PanelTabs>
              <PanelTab $active>Files</PanelTab>
              <PanelTab>Assets</PanelTab>
            </PanelTabs>
            <FilesSelects>
              <Select w={112} h={19}>
                <FolderText><Icon name="siteFolder" />pariwisata</FolderText>
              </Select>
              <Select w={69} h={19}>Local view</Select>
            </FilesSelects>
            <FilesTools>
              <Icon name="connect" />
              <BarIcon $l={9}><Icon name="reload" /></BarIcon>
              <VSep $h={18} $m={8} />
              <Icon name="down" />
              <BarIcon $l={9}><Icon name="up" /></BarIcon>
              <BarIcon $l={9}><Icon name="downCheck" /></BarIcon>
              <BarIcon $l={9}><Icon name="upLock" /></BarIcon>
              <VSep $h={18} $m={8} />
              <Icon name="expand" />
            </FilesTools>
            <FileTree>
              <SiteRow>
                <Expander />
                <BarIcon $l={5}><Icon name="siteFolder" /></BarIcon>
                <SiteName>Site - pariwisata (D:\Program Xam</SiteName>
              </SiteRow>
              <FileList>
                {files.map(([icon, name, selected]) => (
                  <FileRow key={name} $selected={selected}>
                    <Icon name={icon} size={14} />
                    {name}
                  </FileRow>
                ))}
              </FileList>
            </FileTree>
            <Scrollbar thumb={80} />
            <StatusLine>1 local items selected totalling 1642 byte</StatusLine>
          </RightColumn>
        </Workspace>
        <Taskbar>
          <StartButton><Icon name="xp" size={18} />start</StartButton>
          <TaskButton $w={146} $l={12} $active><Icon name="dw" size={14} />Macromedia Dreamw...</TaskButton>
          <TaskButton $w={147} $l={2}><Icon name="firefox" size={15} />localhost / localhost / ...</TaskButton>
          <QuickLaunch>
            <Icon name="mic" />
            <Icon name="note" />
            <Icon name="book" />
            <Icon name="windows" />
            <Icon name="back" />
          </QuickLaunch>
          <Tray>
            <Icon name="green" />
            <Icon name="warn" />
            <Clock>1:40 PM</Clock>
          </Tray>
        </Taskbar>
      </Screen>
    </>
  );
}
